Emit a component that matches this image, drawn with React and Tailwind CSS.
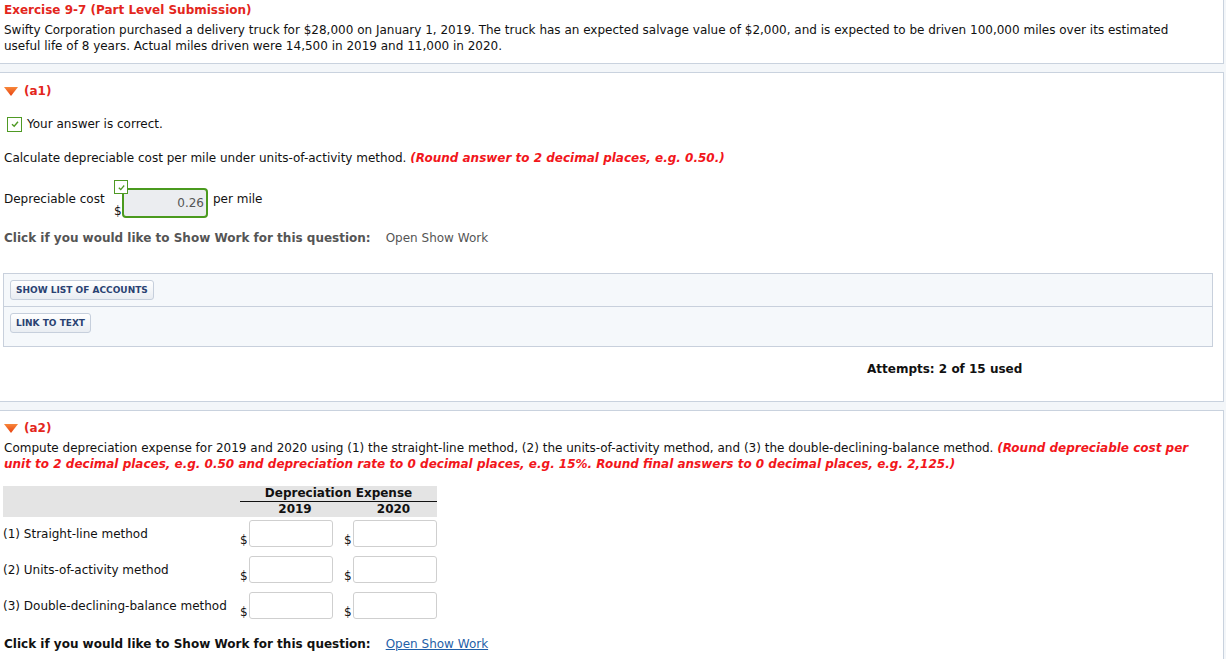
import React from 'react';

const font = { fontFamily: '"DejaVu Sans", Verdana, sans-serif' };

function Triangle() {
  return (
    <svg width="14" height="9" viewBox="0 0 14 9" className="mr-[6px]">
      <defs>
        <linearGradient id="tri" x1="0" y1="0" x2="0" y2="1">
          <stop offset="0" stopColor="#f7873a" />
          <stop offset="1" stopColor="#e8400f" />
        </linearGradient>
      </defs>
      <polygon points="0,0 14,0 7,9" fill="url(#tri)" />
    </svg>
  );
}

function Check({ size = 15 }) {
  return (
    <span
      className="inline-flex items-center justify-center border border-[#4f9a24] bg-white"
      style={{ width: size, height: size }}
    >
      <svg width={size - 5} height={size - 5} viewBox="0 0 10 10">
        <path d="M2 5.2 L4.2 7.3 L8 2.8" fill="none" stroke="#4f9a24" strokeWidth="1.4" />
      </svg>
    </span>
  );
}

function SmallButton({ children }) {
  return (
    <button className="h-[20px] rounded-[3px] border border-[#c6cfdc] bg-gradient-to-b from-white to-[#e9edf2] px-[5px] text-[9px] leading-[18px] font-bold text-[#2a4272]">
      {children}
    </button>
  );
}

function DollarInput() {
  return (
    <div className="flex items-end">
      <span className="w-[9px] text-[12px] leading-[14px]">$</span>
      <div className="h-[27px] w-[84px] rounded-[3px] border border-[#cfcfcf] bg-white" />
    </div>
  );
}

export default function App() {
  const rows = ['(1) Straight-line method', '(2) Units-of-activity method', '(3) Double-declining-balance method'];
  return (
    <div className="h-[659px] w-[1226px] overflow-hidden bg-[#f3f6f9] text-[12px] leading-[16px] text-[#111]" style={font}>
      {/* exercise text */}
      <div className="w-[1224px] border-r border-b border-[#c9d2de] bg-white pl-[4px] pt-[2px] pb-[9px]">
        <div className="font-bold text-[#e3261c]">Exercise 9-7 (Part Level Submission)</div>
        <p className="mt-[4px] pr-[40px]">
          Swifty Corporation purchased a delivery truck for $28,000 on January 1, 2019. The truck has an expected salvage value of $2,000, and is expected to be driven 100,000 miles over its estimated useful life of 8 years. Actual miles driven were 14,500 in 2019 and 11,000 in 2020.
        </p>
      </div>

      {/* a1 */}
      <div className="mt-[8px] h-[330px] w-[1224px] border border-l-0 border-[#c9d2de] bg-white">
        <div className="flex items-center pl-[4px] pt-[10px]">
          <Triangle />
          <span className="font-bold text-[#e3261c]">(a1)</span>
        </div>
        <div className="mt-[17px] flex items-center pl-[7px]">
          <Check />
          <span className="ml-[5px]">Your answer is correct.</span>
        </div>
        <p className="mt-[18px] pl-[4px]">
          Calculate depreciable cost per mile under units-of-activity method.{' '}
          <span className="font-bold italic text-[#f2161b]">(Round answer to 2 decimal places, e.g. 0.50.)</span>
        </p>
        <div className="mt-[14px] flex items-center pl-[4px]">
          <span className="w-[110px]">Depreciable cost</span>
          <div className="relative flex items-end pt-[8px]">
            <span className="absolute top-0 left-0 flex">
              <Check size={14} />
            </span>
            <span className="w-[8px] leading-[14px]">$</span>
            <div className="flex h-[30px] w-[86px] items-center justify-end rounded-[4px] border-2 border-[#4a9a1e] bg-[#ebedf0] pr-[2px] text-[#555]">
              0.26
            </div>
          </div>
          <span className="ml-[5px]">per mile</span>
        </div>
        <div className="mt-[12px] flex pl-[4px]">
          <span className="font-bold text-[#555]">Click if you would like to Show Work for this question:</span>
          <span className="ml-[15px] text-[#555]">Open Show Work</span>
        </div>
        <div className="mt-[27px] ml-[3px] w-[1210px] border border-[#c8d0dc] bg-[#f5f8fb]">
          <div className="flex border-b border-[#c8d0dc] px-[6px] py-[6px]">
            <SmallButton>SHOW LIST OF ACCOUNTS</SmallButton>
          </div>
          <div className="flex px-[6px] pt-[6px] pb-[13px]">
            <SmallButton>LINK TO TEXT</SmallButton>
          </div>
        </div>
        <div className="mt-[14px] pl-[867px] font-bold">Attempts: 2 of 15 used</div>
      </div>

      {/* a2 */}
      <div className="mt-[8px] h-[260px] w-[1224px] border border-l-0 border-[#c9d2de] bg-white">
        <div className="flex items-center pl-[4px] pt-[9px]">
          <Triangle />
          <span className="font-bold text-[#e3261c]">(a2)</span>
        </div>
        <p className="mt-[4px] pl-[4px] pr-[16px]">
          Compute depreciation expense for 2019 and 2020 using (1) the straight-line method, (2) the units-of-activity method, and (3) the double-declining-balance method.{' '}
          <span className="font-bold italic text-[#f2161b]">
            (Round depreciable cost per unit to 2 decimal places, e.g. 0.50 and depreciation rate to 0 decimal places, e.g. 15%. Round final answers to 0 decimal places, e.g. 2,125.)
          </span>
        </p>
        <div className="mt-[14px] ml-[3px] w-[434px]">
          <div className="flex h-[31px] bg-[#e4e4e4] font-bold">
            <div className="w-[237px]" />
            <div className="flex flex-1 flex-col">
              <div className="border-b border-[#111] text-center leading-[15px]">Depreciation Expense</div>
              <div className="flex leading-[15px]">
                <div className="w-[104px] pl-[6px] text-center">2019</div>
                <div className="flex-1 pl-[6px] text-center">2020</div>
              </div>
            </div>
          </div>
          <div className="flex flex-col gap-[9px] pt-[3px]">
            {rows.map((r) => (
              <div key={r} className="flex items-center">
                <div className="w-[237px]">{r}</div>
                <DollarInput />
                <div className="ml-[11px]">
                  <DollarInput />
                </div>
              </div>
            ))}
          </div>
        </div>
        <div className="mt-[17px] flex pl-[4px]">
          <span className="font-bold">Click if you would like to Show Work for this question:</span>
          <span className="ml-[15px] text-[#1f5fa8] underline">Open Show Work</span>
        </div>
      </div>
    </div>
  );
}
